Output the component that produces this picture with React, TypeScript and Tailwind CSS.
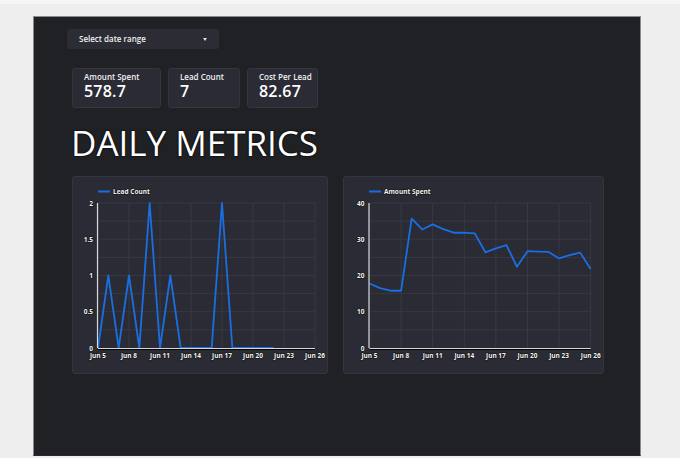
import React from "react";

const leadData = [0, 1, 0, 1, 0, 2, 0, 1, 0, 0, 0, 0, 2, 0, 0, 0, 0, 0];
const spentData = [
  17.8, 16.5, 15.8, 15.8, 35.7, 32.7, 34.1, 32.8, 31.8, 31.8, 31.6, 26.4, 27.5, 28.4, 22.4, 26.7, 26.6,
  26.5, 24.7, 25.6, 26.3, 21.8,
];
const xLabels = ["Jun 5", "Jun 8", "Jun 11", "Jun 14", "Jun 17", "Jun 20", "Jun 23", "Jun 26"];

type ChartProps = {
  w: number;
  h: number;
  left: number;
  right: number;
  top: number;
  bottom: number;
  max: number;
  yTicks: { v: number; label: string }[];
  gridStep: number;
  data: number[];
  legend: string;
};

function Chart({ w, h, left, right, top, bottom, max, yTicks, gridStep, data, legend }: ChartProps) {
  const dx = (right - left) / 21;
  const yOf = (v: number) => bottom - (v / max) * (bottom - top);
  const pts = data.map((v, i) => `${left + i * dx},${yOf(v)}`).join(" ");
  const hLines: number[] = [];
  for (let v = gridStep; v <= max + 0.0001; v += gridStep) hLines.push(v);
  const font = { fontFamily: "'Open Sans', 'Noto Sans', sans-serif" };
  return (
    <svg width={w} height={h} viewBox={`0 0 ${w} ${h}`}>
      <line x1={25} y1={14.5} x2={37} y2={14.5} stroke="#1a6fe0" strokeWidth={2} />
      <text x={40} y={17} fill="#f2f2f2" fontSize={6.5} fontWeight={700} style={font} stroke="#111" strokeWidth={1} paintOrder="stroke">
        {legend}
      </text>
      {hLines.map((v) => (
        <line key={v} x1={left} x2={right} y1={yOf(v)} y2={yOf(v)} stroke="#3a3c47" strokeWidth={0.8} />
      ))}
      {xLabels.map((_, i) => (
        <line key={i} x1={left + i * 3 * dx} x2={left + i * 3 * dx} y1={top} y2={bottom} stroke="#3a3c47" strokeWidth={0.8} />
      ))}
      <polyline points={pts} fill="none" stroke="#1a6fe0" strokeWidth={1.8} strokeLinejoin="round" />
      <line x1={left - 0.5} y1={top} x2={left - 0.5} y2={bottom} stroke="#d8d8d8" strokeWidth={1.2} />
      <line x1={left} y1={bottom + 0.5} x2={right} y2={bottom + 0.5} stroke="#d8d8d8" strokeWidth={1} />
      <line x1={left} y1={bottom + 1.5} x2={right} y2={bottom + 1.5} stroke="#050505" strokeWidth={1} />
      {yTicks.map((t) => (
        <text
          key={t.label}
          x={left - 5}
          y={yOf(t.v) + 2.5}
          textAnchor="end"
          fill="#f2f2f2"
          fontSize={6.5}
          fontWeight={700}
          style={font}
          stroke="#111"
          strokeWidth={1}
          paintOrder="stroke"
        >
          {t.label}
        </text>
      ))}
      {xLabels.map((l, i) => (
        <text
          key={l}
          x={left + i * 3 * dx}
          y={bottom + 10}
          textAnchor="middle"
          fill="#f2f2f2"
          fontSize={6.5}
          fontWeight={700}
          style={font}
          stroke="#111"
          strokeWidth={1}
          paintOrder="stroke"
        >
          {l}
        </text>
      ))}
    </svg>
  );
}

function Kpi({ label, value, w }: { label: string; value: string; w: string }) {
  return (
    <div className={`${w} h-[40px] rounded-[3px] bg-[#2a2b34] border border-[#34353e] pl-[11px] pt-[2px] flex flex-col`}>
      <span className="text-[8px] font-semibold text-[#f0f0f0] leading-[11px]">{label}</span>
      <span className="text-[16px] font-semibold text-white leading-[19px] tracking-[0.2px]">{value}</span>
    </div>
  );
}

export default function App() {
  return (
    <div
      className="w-[680px] h-[458px] bg-[#eeeeee] overflow-hidden flex flex-col"
      style={{ fontFamily: "'Open Sans', 'Noto Sans', sans-serif" }}
    >
      <div className="h-[4px] bg-[#f6f6f6] shrink-0" />
      <div className="ml-[33px] mt-[12px] w-[608px] h-[440px] bg-[#202124] border border-[#8a8a8a] border-b-[#2a2a2a] pl-[33px] pt-[12px] flex flex-col">
        <div className="w-[152px] h-[20px] rounded-[3px] bg-[#2b2c34] flex items-center justify-between pl-[12px] pr-[12px]">
          <span className="text-[8px] font-semibold text-[#f0f0f0]">Select date range</span>
          <span className="w-0 h-0 border-l-[2.5px] border-r-[2.5px] border-t-[3px] border-l-transparent border-r-transparent border-t-[#e0e0e0]" />
        </div>
        <div className="flex gap-[7px] ml-[5px] mt-[19px]">
          <Kpi label="Amount Spent" value="578.7" w="w-[89px]" />
          <Kpi label="Lead Count" value="7" w="w-[72px]" />
          <Kpi label="Cost Per Lead" value="82.67" w="w-[71px]" />
        </div>
        <div className="ml-[4px] mt-[13px] h-[44px] text-[35px] leading-[44px] text-white font-normal [text-shadow:0_0_2px_#000,0_0_1px_#000]">
          DAILY METRICS
        </div>
        <div className="flex gap-[15px] ml-[5px] mt-[11px]">
          <div className="w-[256px] h-[198px] rounded-[3px] bg-[#2a2b34] border border-[#34353e]">
            <Chart
              w={254}
              h={196}
              left={25}
              right={242}
              top={26}
              bottom={171}
              max={2}
              gridStep={0.25}
              yTicks={[
                { v: 2, label: "2" },
                { v: 1.5, label: "1.5" },
                { v: 1, label: "1" },
                { v: 0.5, label: "0.5" },
                { v: 0, label: "0" },
              ]}
              data={leadData}
              legend="Lead Count"
            />
          </div>
          <div className="w-[261px] h-[198px] rounded-[3px] bg-[#2a2b34] border border-[#34353e]">
            <Chart
              w={259}
              h={196}
              left={25.5}
              right={246.7}
              top={26}
              bottom={171}
              max={40}
              gridStep={5}
              yTicks={[
                { v: 40, label: "40" },
                { v: 30, label: "30" },
                { v: 20, label: "20" },
                { v: 10, label: "10" },
                { v: 0, label: "0" },
              ]}
              data={spentData}
              legend="Amount Spent"
            />
          </div>
        </div>
      </div>
    </div>
  );
}
